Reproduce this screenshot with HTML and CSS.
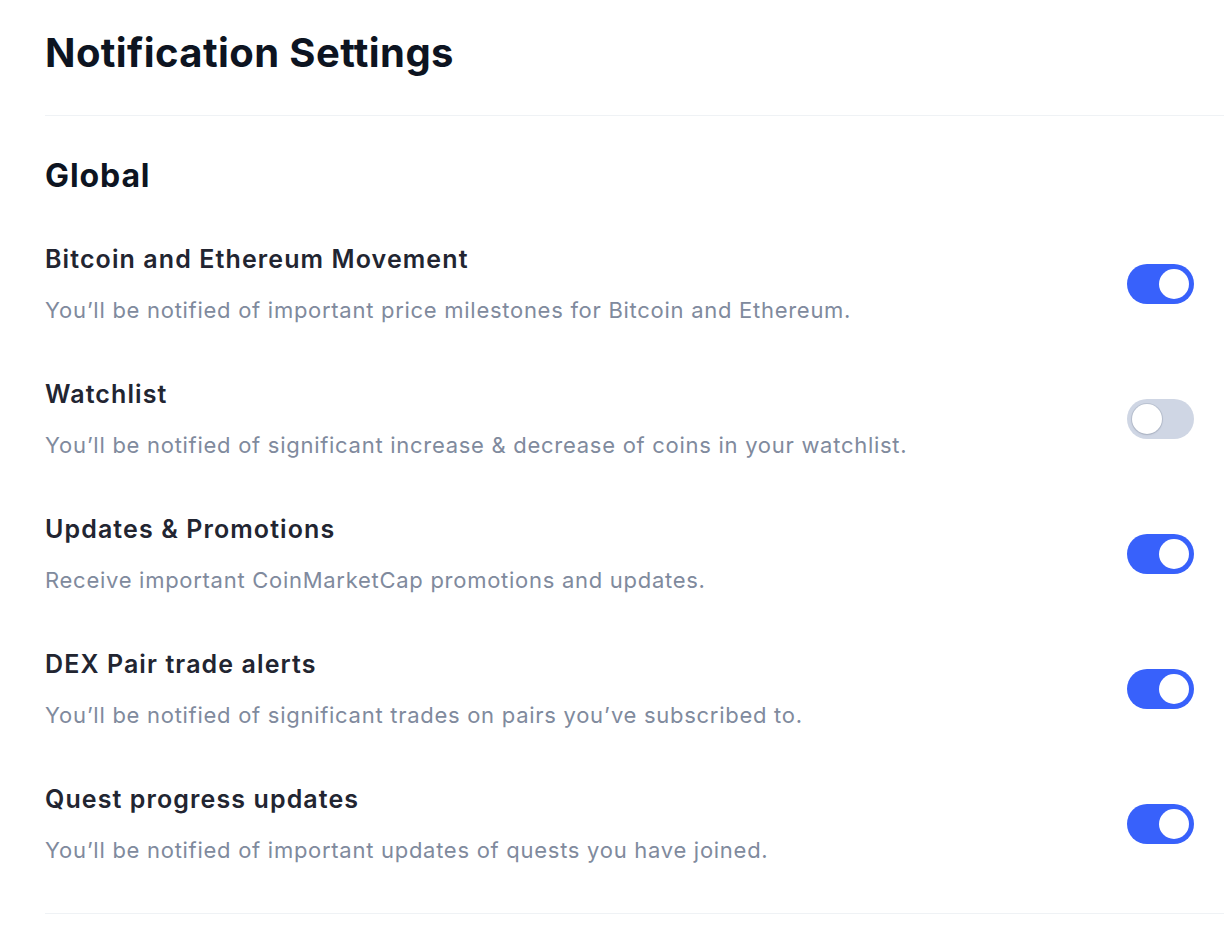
FILE: index.html
```html
<!DOCTYPE html>
<html lang="en">
<head>
<meta charset="utf-8">
<title>Notification Settings</title>
<link rel="stylesheet" href="styles.css">
</head>
<body>
<main class="page">
  <header class="page-header">
    <h1 class="page-title">Notification Settings</h1>
  </header>
  <section class="group">
    <h2 class="group-title">Global</h2>
    <ul class="settings">
      <li class="setting">
        <div class="setting-text">
          <div class="setting-name">Bitcoin and Ethereum Movement</div>
          <div class="setting-desc">You’ll be notified of important price milestones for Bitcoin and Ethereum.</div>
        </div>
        <span class="toggle is-on" role="switch" aria-checked="true"><span class="knob"></span></span>
      </li>
      <li class="setting">
        <div class="setting-text">
          <div class="setting-name">Watchlist</div>
          <div class="setting-desc">You’ll be notified of significant increase &amp; decrease of coins in your watchlist.</div>
        </div>
        <span class="toggle" role="switch" aria-checked="false"><span class="knob"></span></span>
      </li>
      <li class="setting">
        <div class="setting-text">
          <div class="setting-name">Updates &amp; Promotions</div>
          <div class="setting-desc">Receive important CoinMarketCap promotions and updates.</div>
        </div>
        <span class="toggle is-on" role="switch" aria-checked="true"><span class="knob"></span></span>
      </li>
      <li class="setting">
        <div class="setting-text">
          <div class="setting-name">DEX Pair trade alerts</div>
          <div class="setting-desc">You’ll be notified of significant trades on pairs you’ve subscribed to.</div>
        </div>
        <span class="toggle is-on" role="switch" aria-checked="true"><span class="knob"></span></span>
      </li>
      <li class="setting">
        <div class="setting-text">
          <div class="setting-name">Quest progress updates</div>
          <div class="setting-desc">You’ll be notified of important updates of quests you have joined.</div>
        </div>
        <span class="toggle is-on" role="switch" aria-checked="true"><span class="knob"></span></span>
      </li>
    </ul>
  </section>
</main>
</body>
</html>
```
FILE: styles.css
```css
* { box-sizing: border-box; }
html, body { margin: 0; padding: 0; background: #ffffff; }
body {
  font-family: Inter, "Noto Sans", "Liberation Sans", sans-serif;
  color: #222531;
}
.page {
  padding-left: 45px;
  padding-top: 29px;
}
.page-header {
  border-bottom: 1px solid #eff2f5;
  padding-bottom: 38px;
}
.page-title {
  margin: 0;
  font-size: 40px;
  line-height: 48px;
  font-weight: 700;
  letter-spacing: 0.4px;
  color: #0d1421;
}
.group {
  border-bottom: 1px solid #eff2f5;
  padding-top: 40px;
  padding-bottom: 49px;
}
.group-title {
  margin: 0 0 47px 0;
  font-size: 32px;
  line-height: 40px;
  font-weight: 700;
  letter-spacing: 0.9px;
  color: #0d1421;
}
.settings {
  list-style: none;
  margin: 0;
  padding: 0;
  display: flex;
  flex-direction: column;
  gap: 54px;
}
.setting {
  display: flex;
  align-items: center;
  justify-content: space-between;
  padding-right: 30px;
}
.setting-name {
  font-size: 25px;
  line-height: 32px;
  font-weight: 600;
  letter-spacing: 1.1px;
  color: #222531;
  margin-bottom: 21px;
}
.setting-desc {
  font-size: 22px;
  line-height: 28px;
  font-weight: 400;
  letter-spacing: 0.72px;
  color: #808a9d;
}
.toggle {
  display: flex;
  align-items: center;
  width: 67px;
  height: 40px;
  border-radius: 20px;
  background: #cfd6e4;
  padding: 5px;
  flex-shrink: 0;
}
.toggle .knob {
  width: 30px;
  height: 30px;
  border-radius: 50%;
  background: #ffffff;
  box-shadow: 0 0 0 1px rgba(128, 138, 157, 0.25), 0 1px 2px rgba(88, 102, 126, 0.2);
}
.toggle.is-on {
  background: #3861fb;
  justify-content: flex-end;
}
.toggle.is-on .knob {
  box-shadow: none;
}
```
